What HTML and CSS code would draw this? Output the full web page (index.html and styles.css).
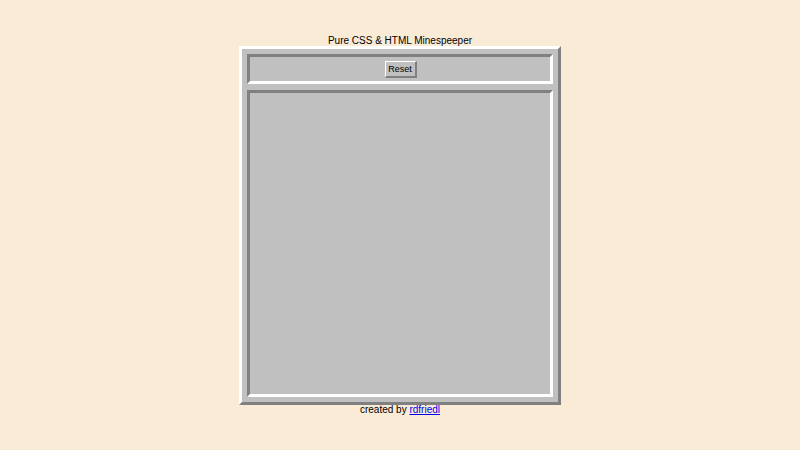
FILE: index.html
```html
<!DOCTYPE html>
<html>
<head>
<meta charset="utf-8">
<title>Pure CSS &amp; HTML Minespeeper</title>
<link rel="stylesheet" href="styles.css">
</head>
<body>
<div class="page">
  <div class="title">Pure CSS &amp; HTML Minespeeper</div>
  <div class="game">
    <div class="header">
      <button class="reset" type="button">Reset</button>
    </div>
    <div class="board"></div>
  </div>
  <div class="credit">created by <a href="#">rdfriedl</a></div>
</div>
</body>
</html>
```
FILE: styles.css
```css
html, body {
  margin: 0;
  padding: 0;
  background: #faebd7;
}
body {
  font-family: "Liberation Sans", Arial, sans-serif;
  font-size: 10px;
  color: #000;
}
.page {
  display: flex;
  flex-direction: column;
  align-items: center;
  padding-top: 35px;
}
.title {
  line-height: 12px;
  height: 11px;
}
.game {
  width: 306px;
  padding: 5px;
  background: #c0c0c0;
  border: 3px solid;
  border-color: #ffffff #808080 #808080 #ffffff;
  display: flex;
  flex-direction: column;
  gap: 6px;
}
.header {
  height: 24px;
  border: 3px solid;
  border-color: #808080 #ffffff #ffffff #808080;
  display: flex;
  align-items: center;
  justify-content: center;
}
.reset {
  font-family: "Liberation Sans", Arial, sans-serif;
  font-size: 9px;
  height: 17px;
  width: 32px;
  padding: 0;
  background: #c0c0c0;
  border-style: solid;
  border-width: 1px 2px 2px 1px;
  border-color: #ffffff #808080 #808080 #ffffff;
  color: #000;
  margin: 1px 0 0 1px;
}
.board {
  height: 301px;
  border: 3px solid;
  border-color: #808080 #ffffff #ffffff #808080;
}
.credit {
  line-height: 12px;
  margin-top: -1px;
}
.credit a {
  color: #0000ee;
}
```
